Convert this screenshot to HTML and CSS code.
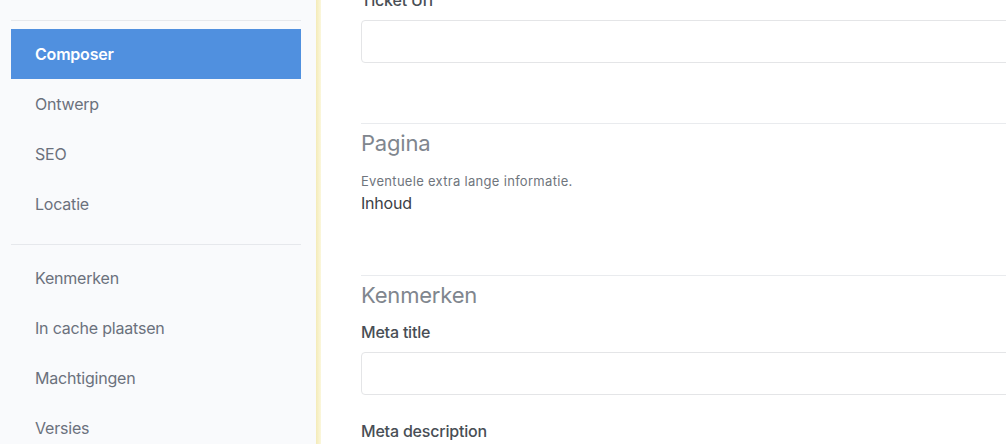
FILE: index.html
```
<!DOCTYPE html>
<html lang="nl">
<head>
    <meta charset="UTF-8">
    <meta name="viewport" content="width=device-width, initial-scale=1.0">
    <title>Pagina bewerken</title>
    <link rel="stylesheet" href="styles.css">
</head>
<body>
    <div class="layout">
        <aside class="sidebar">
            <hr class="divider">
            <nav class="menu">
                <a href="#" class="menu-item active">Composer</a>
                <a href="#" class="menu-item">Ontwerp</a>
                <a href="#" class="menu-item">SEO</a>
                <a href="#" class="menu-item">Locatie</a>
            </nav>
            <hr class="divider">
            <nav class="menu">
                <a href="#" class="menu-item">Kenmerken</a>
                <a href="#" class="menu-item">In cache plaatsen</a>
                <a href="#" class="menu-item">Machtigingen</a>
                <a href="#" class="menu-item">Versies</a>
            </nav>
        </aside>
        <div class="edge"></div>
        <main class="content">
            <div class="field">
                <label for="ticket-url">Ticket Url</label>
                <input type="text" id="ticket-url">
            </div>

            <section class="section">
                <h3>Pagina</h3>
                <p class="help">Eventuele extra lange informatie.</p>
                <div class="field">
                    <p class="value">Inhoud</p>
                </div>
            </section>

            <section class="section">
                <h3>Kenmerken</h3>
                <div class="field">
                    <label for="meta-title">Meta title</label>
                    <input type="text" id="meta-title">
                </div>
                <div class="field">
                    <label for="meta-description">Meta description</label>
                    <textarea id="meta-description"></textarea>
                </div>
            </section>
        </main>
    </div>
</body>
</html>
```

FILE: styles.css
```
body {
    margin: 0;
    font-family: Inter, "Noto Sans", sans-serif;
    background: #fff;
    overflow: hidden;
    height: 444px;
}
.layout {
    display: flex;
    height: 444px;
}
.sidebar {
    width: 316px;
    flex-shrink: 0;
    box-sizing: border-box;
    padding: 5px 15px 0 11px;
    background: #f9fafc;
}
.divider {
    border: none;
    border-top: 1px solid #e6e8ec;
    margin: 15px 0 8px;
}
.menu {
    display: flex;
    flex-direction: column;
}
.menu-item {
    display: block;
    height: 50px;
    line-height: 50px;
    padding-left: 24px;
    font-size: 16px;
    color: #6b717c;
    text-decoration: none;
    letter-spacing: -0.2px;
}
.menu-item.active {
    background: #5090df;
    color: #fff;
    font-weight: 600;
}
.edge {
    width: 5px;
    flex-shrink: 0;
    background: linear-gradient(90deg, #f4ebb8, #fbf7dc);
}
.content {
    flex-shrink: 0;
    width: 760px;
    padding-left: 40px;
    margin-top: -12px;
}
.field {
    margin-bottom: 24px;
}
.field label {
    display: block;
    font-size: 16px;
    line-height: 24px;
    font-weight: 500;
    color: #484e55;
    margin-bottom: 8px;
    letter-spacing: -0.2px;
}
.field input,
.field textarea {
    display: block;
    width: 100%;
    height: 43px;
    box-sizing: border-box;
    border: 1px solid #e4e5e7;
    border-radius: 4px;
    background: #fff;
}
.section {
    margin-top: 60px;
    border-top: 1px solid #e9ebee;
    padding-top: 6px;
}
.section h3 {
    margin: 0 0 12px;
    font-size: 22px;
    line-height: 26px;
    font-weight: 400;
    color: #80868e;
    letter-spacing: -0.2px;
}
.help {
    margin: 0;
    padding-top: 3px;
    font-size: 13px;
    line-height: 20px;
    color: #6f757d;
    letter-spacing: 0.3px;
}
.value {
    margin: 0;
    font-size: 16px;
    line-height: 24px;
    color: #3b4046;
    letter-spacing: -0.2px;
}
```
